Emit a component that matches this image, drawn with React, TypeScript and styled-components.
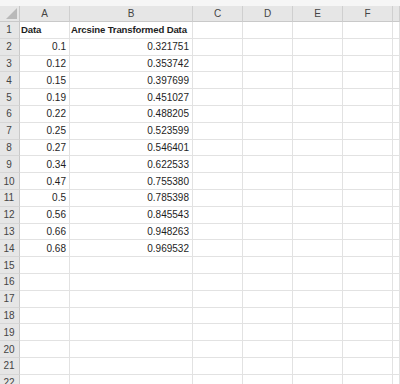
import React from "react";
import styled, { createGlobalStyle } from "styled-components";

const GlobalStyle = createGlobalStyle`
  html, body {
    margin: 0;
    padding: 0;
    background: #ffffff;
    overflow: hidden;
  }
  body {
    font-family: "Liberation Sans", Arial, sans-serif;
  }
`;

const COLS = ["A", "B", "C", "D", "E", "F", ""];
const ROW_COUNT = 22;

const data: [string, string][] = [
  ["0.1", "0.321751"],
  ["0.12", "0.353742"],
  ["0.15", "0.397699"],
  ["0.19", "0.451027"],
  ["0.22", "0.488205"],
  ["0.25", "0.523599"],
  ["0.27", "0.546401"],
  ["0.34", "0.622533"],
  ["0.47", "0.755380"],
  ["0.5", "0.785398"],
  ["0.56", "0.845543"],
  ["0.66", "0.948263"],
  ["0.68", "0.969532"],
];

const Page = styled.div`
  width: 400px;
  height: 384px;
  overflow: hidden;
  display: flex;
  flex-direction: column;
`;

const TopStrip = styled.div`
  height: 6px;
  background: #f6f6f6;
  flex-shrink: 0;
`;

const Sheet = styled.div`
  display: grid;
  grid-template-columns: 20px 50px 123px 50px 50px 50px 50px 7px;
  grid-template-rows: 16px repeat(${ROW_COUNT}, 16.8px);
`;

const Corner = styled.div`
  background: #e6e6e6;
  border-right: 1px solid #c9c9c9;
  border-bottom: 1px solid #c9c9c9;
  display: flex;
  align-items: flex-end;
  justify-content: flex-end;
  padding: 0 2px 2px 0;
  box-sizing: border-box;
`;

const ColHeader = styled.div`
  background: #e6e6e6;
  border-right: 1px solid #cfcfcf;
  border-bottom: 1px solid #c9c9c9;
  box-sizing: border-box;
  color: #444444;
  font-size: 10px;
  display: flex;
  align-items: center;
  justify-content: center;
`;

const RowHeader = styled.div`
  background: #e6e6e6;
  border-right: 1px solid #c9c9c9;
  border-bottom: 1px solid #d6d6d6;
  box-sizing: border-box;
  color: #444444;
  font-size: 10px;
  display: flex;
  align-items: center;
  justify-content: center;
  padding-right: 1px;
`;

const Cell = styled.div<{ $align?: "left" | "right"; $bold?: boolean }>`
  border-right: 1px solid #e2e2e2;
  border-bottom: 1px solid #e2e2e2;
  box-sizing: border-box;
  color: #1e1e1e;
  font-size: ${(p) => (p.$bold ? "9.6px" : "10px")};
  font-weight: ${(p) => (p.$bold ? 700 : 400)};
  letter-spacing: ${(p) => (p.$bold ? "-0.15px" : "0")};
  display: flex;
  align-items: center;
  justify-content: ${(p) => (p.$align === "right" ? "flex-end" : "flex-start")};
  padding: 0 3px 0 1px;
  white-space: nowrap;
  overflow: hidden;
`;

function CornerMark() {
  return (
    <svg width="11" height="11" viewBox="0 0 11 11">
      <polygon points="11,0 11,11 0,11" fill="#b9b9b9" />
    </svg>
  );
}

function cellContent(row: number, col: number) {
  if (row === 1) {
    if (col === 0) return { text: "Data", bold: true, align: "left" as const };
    if (col === 1) return { text: "Arcsine Transformed Data", bold: true, align: "left" as const };
    return null;
  }
  const d = data[row - 2];
  if (!d || col > 1) return null;
  return { text: d[col], bold: false, align: "right" as const };
}

export default function App() {
  const rows = Array.from({ length: ROW_COUNT }, (_, i) => i + 1);
  return (
    <Page>
      <GlobalStyle />
      <TopStrip />
      <Sheet>
        <Corner>
          <CornerMark />
        </Corner>
        {COLS.map((c, i) => (
          <ColHeader key={"h" + i}>{c}</ColHeader>
        ))}
        {rows.map((r) => (
          <React.Fragment key={r}>
            <RowHeader>{r}</RowHeader>
            {COLS.map((_, ci) => {
              const content = cellContent(r, ci);
              return (
                <Cell key={ci} $align={content?.align} $bold={content?.bold}>
                  {content?.text}
                </Cell>
              );
            })}
          </React.Fragment>
        ))}
      </Sheet>
    </Page>
  );
}
